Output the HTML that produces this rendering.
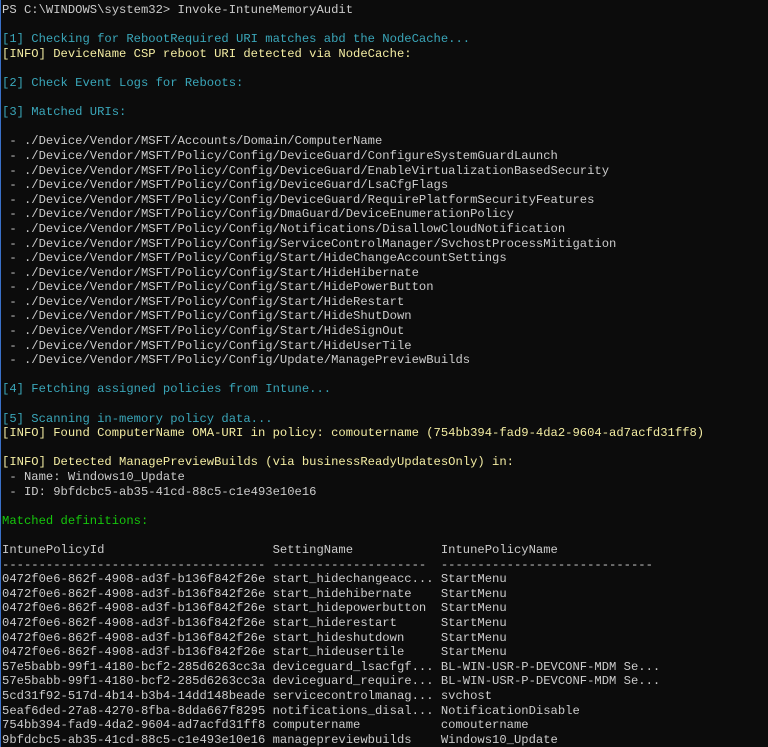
<!DOCTYPE html>
<html><head><meta charset="utf-8"><style>
html,body{margin:0;padding:0;background:#0c0c0c;width:768px;height:747px;overflow:hidden}
body{border-left:1px solid #3a70c8;box-sizing:border-box}
pre{margin:0;padding:3px 0 0 1px;font-family:"Liberation Mono",monospace;font-size:12.2px;line-height:14.6px;color:#cccccc;white-space:pre}
.c{color:#3aa6b9}.y{color:#f4eda3}.g{color:#16c60c}
</style></head><body><pre>PS C:\WINDOWS\system32&gt; Invoke-IntuneMemoryAudit

<span class="c">[1] Checking for RebootRequired URI matches abd the NodeCache...</span>
<span class="y">[INFO] DeviceName CSP reboot URI detected via NodeCache:</span>

<span class="c">[2] Check Event Logs for Reboots:</span>

<span class="c">[3] Matched URIs:</span>

 - ./Device/Vendor/MSFT/Accounts/Domain/ComputerName
 - ./Device/Vendor/MSFT/Policy/Config/DeviceGuard/ConfigureSystemGuardLaunch
 - ./Device/Vendor/MSFT/Policy/Config/DeviceGuard/EnableVirtualizationBasedSecurity
 - ./Device/Vendor/MSFT/Policy/Config/DeviceGuard/LsaCfgFlags
 - ./Device/Vendor/MSFT/Policy/Config/DeviceGuard/RequirePlatformSecurityFeatures
 - ./Device/Vendor/MSFT/Policy/Config/DmaGuard/DeviceEnumerationPolicy
 - ./Device/Vendor/MSFT/Policy/Config/Notifications/DisallowCloudNotification
 - ./Device/Vendor/MSFT/Policy/Config/ServiceControlManager/SvchostProcessMitigation
 - ./Device/Vendor/MSFT/Policy/Config/Start/HideChangeAccountSettings
 - ./Device/Vendor/MSFT/Policy/Config/Start/HideHibernate
 - ./Device/Vendor/MSFT/Policy/Config/Start/HidePowerButton
 - ./Device/Vendor/MSFT/Policy/Config/Start/HideRestart
 - ./Device/Vendor/MSFT/Policy/Config/Start/HideShutDown
 - ./Device/Vendor/MSFT/Policy/Config/Start/HideSignOut
 - ./Device/Vendor/MSFT/Policy/Config/Start/HideUserTile
 - ./Device/Vendor/MSFT/Policy/Config/Update/ManagePreviewBuilds

<span class="c">[4] Fetching assigned policies from Intune...</span>

<span class="c">[5] Scanning in-memory policy data...</span>
<span class="y">[INFO] Found ComputerName OMA-URI in policy: comoutername (754bb394-fad9-4da2-9604-ad7acfd31ff8)</span>

<span class="y">[INFO] Detected ManagePreviewBuilds (via businessReadyUpdatesOnly) in:</span>
 - Name: Windows10_Update
 - ID: 9bfdcbc5-ab35-41cd-88c5-c1e493e10e16

<span class="g">Matched definitions:</span>

IntunePolicyId                       SettingName            IntunePolicyName
------------------------------------ ---------------------  -----------------------------
0472f0e6-862f-4908-ad3f-b136f842f26e start_hidechangeacc... StartMenu
0472f0e6-862f-4908-ad3f-b136f842f26e start_hidehibernate    StartMenu
0472f0e6-862f-4908-ad3f-b136f842f26e start_hidepowerbutton  StartMenu
0472f0e6-862f-4908-ad3f-b136f842f26e start_hiderestart      StartMenu
0472f0e6-862f-4908-ad3f-b136f842f26e start_hideshutdown     StartMenu
0472f0e6-862f-4908-ad3f-b136f842f26e start_hideusertile     StartMenu
57e5babb-99f1-4180-bcf2-285d6263cc3a deviceguard_lsacfgf... BL-WIN-USR-P-DEVCONF-MDM Se...
57e5babb-99f1-4180-bcf2-285d6263cc3a deviceguard_require... BL-WIN-USR-P-DEVCONF-MDM Se...
5cd31f92-517d-4b14-b3b4-14dd148beade servicecontrolmanag... svchost
5eaf6ded-27a8-4270-8fba-8dda667f8295 notifications_disal... NotificationDisable
754bb394-fad9-4da2-9604-ad7acfd31ff8 computername           comoutername
9bfdcbc5-ab35-41cd-88c5-c1e493e10e16 managepreviewbuilds    Windows10_Update
</pre></body></html>
